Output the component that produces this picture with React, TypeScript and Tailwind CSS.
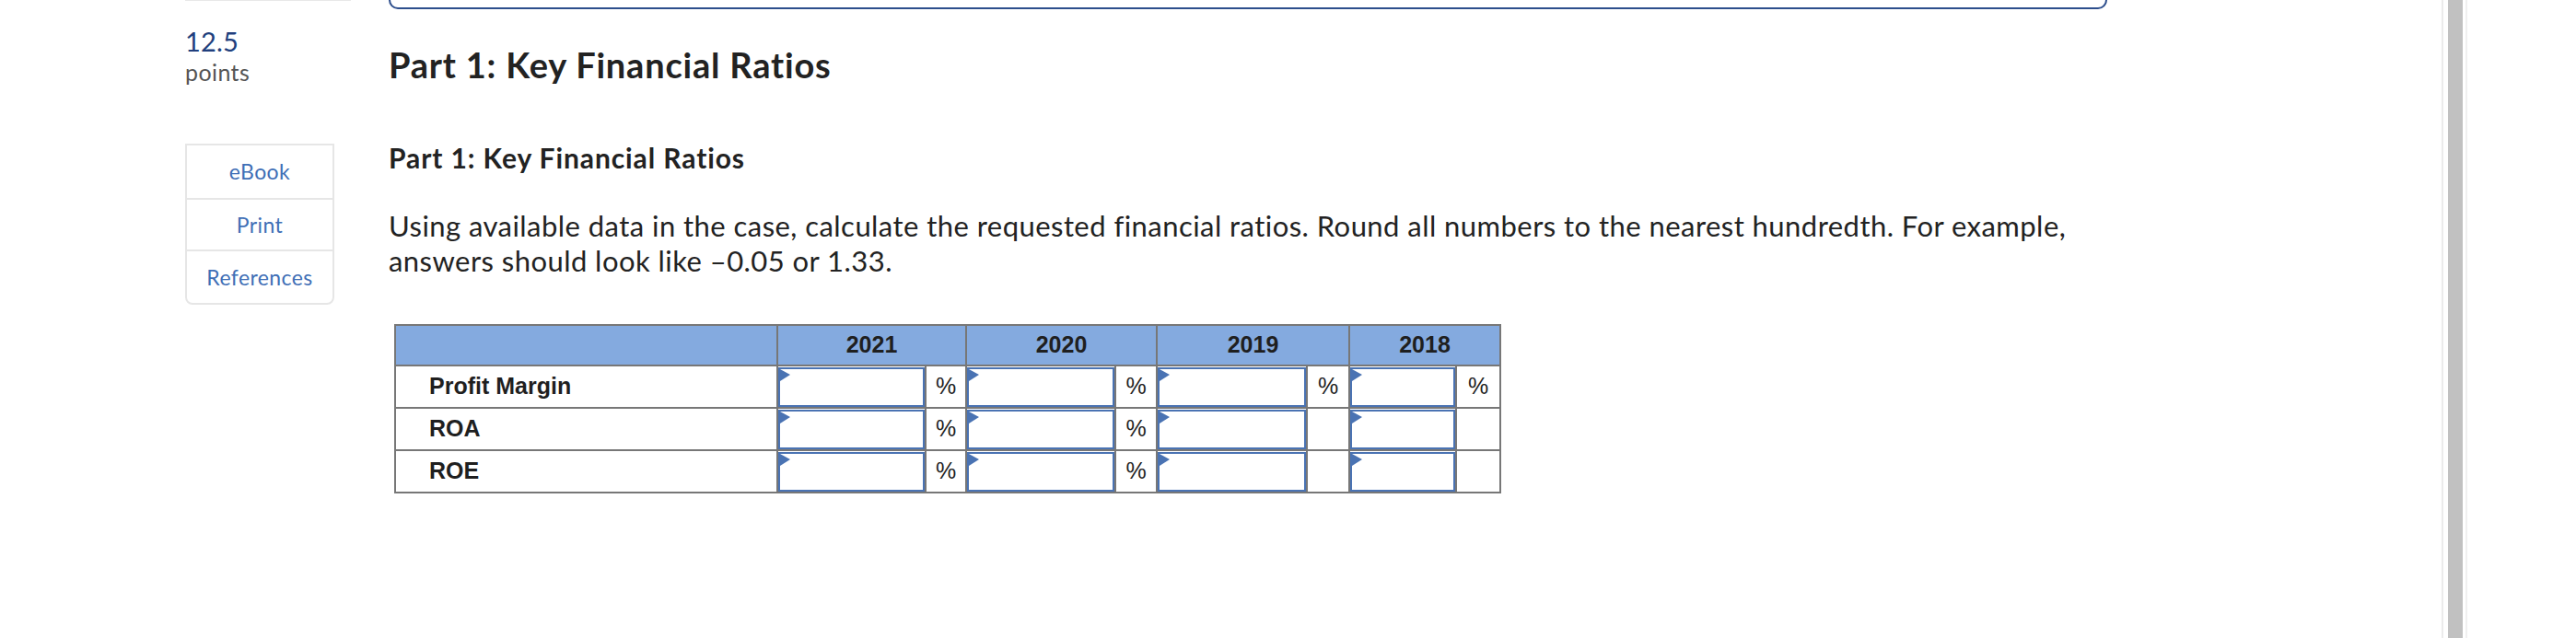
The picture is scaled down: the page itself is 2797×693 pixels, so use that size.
import React from "react";

const sideLinks = [
  { label: "eBook", h: "h-[59px]" },
  { label: "Print", h: "h-[56px]" },
  { label: "References", h: "h-[56px]" },
];

const years = ["2021", "2020", "2019", "2018"];

const ratioRows = [
  { name: "Profit Margin", pct: [true, true, true, true] },
  { name: "ROA", pct: [true, true, false, false] },
  { name: "ROE", pct: [true, true, false, false] },
];

function AnswerBox() {
  return (
    <div className="relative h-full w-full border-2 border-[#4a73b3] bg-white">
      <svg className="absolute left-0 top-0" width="11" height="14" viewBox="0 0 11 14">
        <polygon points="0,0 11,6 0,13" fill="#4a73b3" />
      </svg>
    </div>
  );
}

export default function App() {
  return (
    <div className="flex h-screen w-full overflow-hidden bg-white font-['Lato',sans-serif]">
      <div className="flex flex-1 pl-[201px]">
        {/* left column */}
        <aside className="w-[180px] shrink-0 border-t border-[#e8e8e8]">
          <p className="mt-[28px] text-[29px] leading-[32px] tracking-[0.2px] text-[#213f7d]">12.5</p>
          <p className="mt-[3px] text-[25px] leading-[28px] tracking-[0.4px] text-[#555]">points</p>
          <div className="mt-[64px] w-[162px] rounded-b-[8px] border-2 border-[#e6e6e6] divide-y-2 divide-[#e6e6e6]">
            {sideLinks.map((link) => (
              <div
                key={link.label}
                className={`flex items-center justify-center text-[23px] tracking-[0.4px] text-[#3f6fb6] ${link.h}`}
              >
                {link.label}
              </div>
            ))}
          </div>
        </aside>

        {/* main question */}
        <section className="ml-[41px] w-[1866px] shrink-0">
          <div className="h-[10px] rounded-b-[10px] border-2 border-t-0 border-[#2d4e8c]" />

          <h1 className="mt-[37px] text-[38px] font-bold leading-[46px] tracking-[0.8px] text-[#222]">
            Part 1: Key Financial Ratios
          </h1>
          <h2 className="mt-[61px] text-[30px] font-bold leading-[35px] tracking-[0.9px] text-[#222]">
            Part 1: Key Financial Ratios
          </h2>
          <p className="mt-[37px] text-[31px] leading-[38px] tracking-[0.45px] text-[#222]">
            Using available data in the case, calculate the requested financial ratios. Round all numbers to the
            nearest hundredth. For example, answers should look like –0.05 or 1.33.
          </p>

          <div className="ml-[6px] mt-[50px] grid w-fit grid-cols-[413px_159px_42px_160px_43px_161px_44px_114px_46px] grid-rows-[42px_44px_44px_44px] gap-[2px] bg-[#777] p-[2px] font-['Liberation_Sans',Arial,sans-serif] text-[25px] text-[#1f1f1f]">
            <div className="bg-[#84aadf]" />
            {years.map((y) => (
              <div key={y} className="col-span-2 flex items-center justify-center bg-[#84aadf] font-bold">
                {y}
              </div>
            ))}

            {ratioRows.map((row) => (
              <React.Fragment key={row.name}>
                <div className="flex items-center bg-white pl-[36px] font-bold">{row.name}</div>
                {row.pct.map((hasPct, i) => (
                  <React.Fragment key={i}>
                    <div className="bg-white pt-[1px]">
                      <AnswerBox />
                    </div>
                    <div className="flex items-center justify-center bg-white">{hasPct ? "%" : ""}</div>
                  </React.Fragment>
                ))}
              </React.Fragment>
            ))}
          </div>
        </section>
      </div>

      {/* scrollbar */}
      <div className="flex w-[28px] shrink-0 border-x-2 border-l-[#ebebeb] border-r-[#f0f0f0] pl-[5px]">
        <div className="h-full w-[16px] bg-[#c1c1c1]" />
      </div>
      <div className="w-[118px] shrink-0" />
    </div>
  );
}
